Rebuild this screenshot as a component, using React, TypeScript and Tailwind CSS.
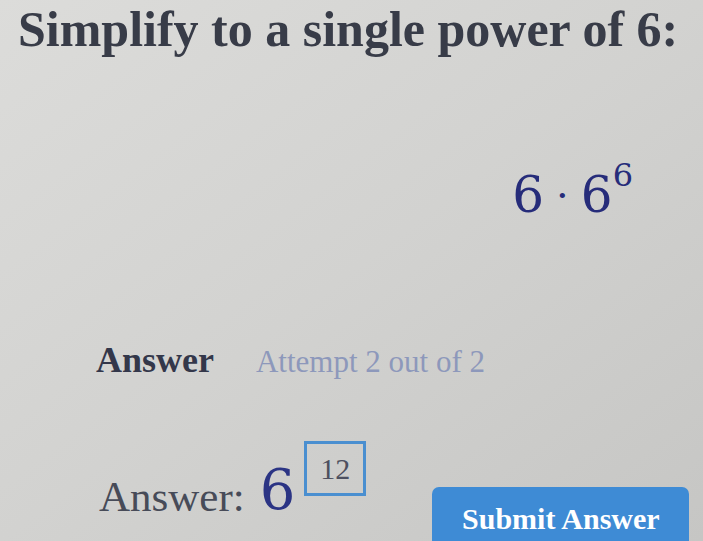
export default function App() {
  return (
    <div
      className="h-[541px] w-[703px] overflow-hidden bg-gradient-to-br from-[#dcdcda] via-[#d2d2d0] to-[#c6c6c4] text-[#3b3f4c]"
      style={{ fontFamily: '"Liberation Serif", serif' }}
    >
      <h1 className="pl-[18px] pt-[1px] text-[50px] font-bold leading-[56px] whitespace-nowrap text-[#383c48]">
        Simplify to a single power of 6:
      </h1>

      <div className="mt-[108px] flex justify-end pr-[70px]">
        <div className="flex items-start text-[#262c7a]" style={{ fontFamily: '"DejaVu Serif", serif' }}>
          <span className="text-[50px] leading-[60px]">6</span>
          <span className="mx-[12px] text-[40px] leading-[60px]">·</span>
          <span className="text-[50px] leading-[60px]">6</span>
          <span className="-mt-[10px] text-[32px] leading-[40px]">6</span>
        </div>
      </div>

      <div className="mt-[115px] flex items-baseline gap-[42px] pl-[96px] leading-[40px]">
        <span className="text-[36px] font-bold text-[#33374a]">Answer</span>
        <span className="text-[31px] text-[#8d98bb]">Attempt 2 out of 2</span>
      </div>

      <div className="mt-[59px] flex items-start pl-[99px]">
        <span className="mt-[32px] text-[43px] leading-[48px] text-[#474b58]">Answer:</span>
        <span
          className="ml-[15px] mt-[17px] text-[56px] leading-[64px] text-[#2b3484]"
          style={{ fontFamily: '"DejaVu Serif", serif' }}
        >
          6
        </span>
        <div className="ml-[9px] mt-[0px] flex h-[55px] w-[62px] items-center justify-center border-[3px] border-[#4a8fd0] text-[30px] text-[#4d5060]">
          12
        </div>
        <button className="ml-[66px] mt-[46px] flex h-[80px] w-[257px] items-start justify-center rounded-[7px] bg-[#3e8bd5] pt-[14px] text-[30px] font-bold leading-[36px] text-white">
          Submit Answer
        </button>
      </div>
    </div>
  );
}
